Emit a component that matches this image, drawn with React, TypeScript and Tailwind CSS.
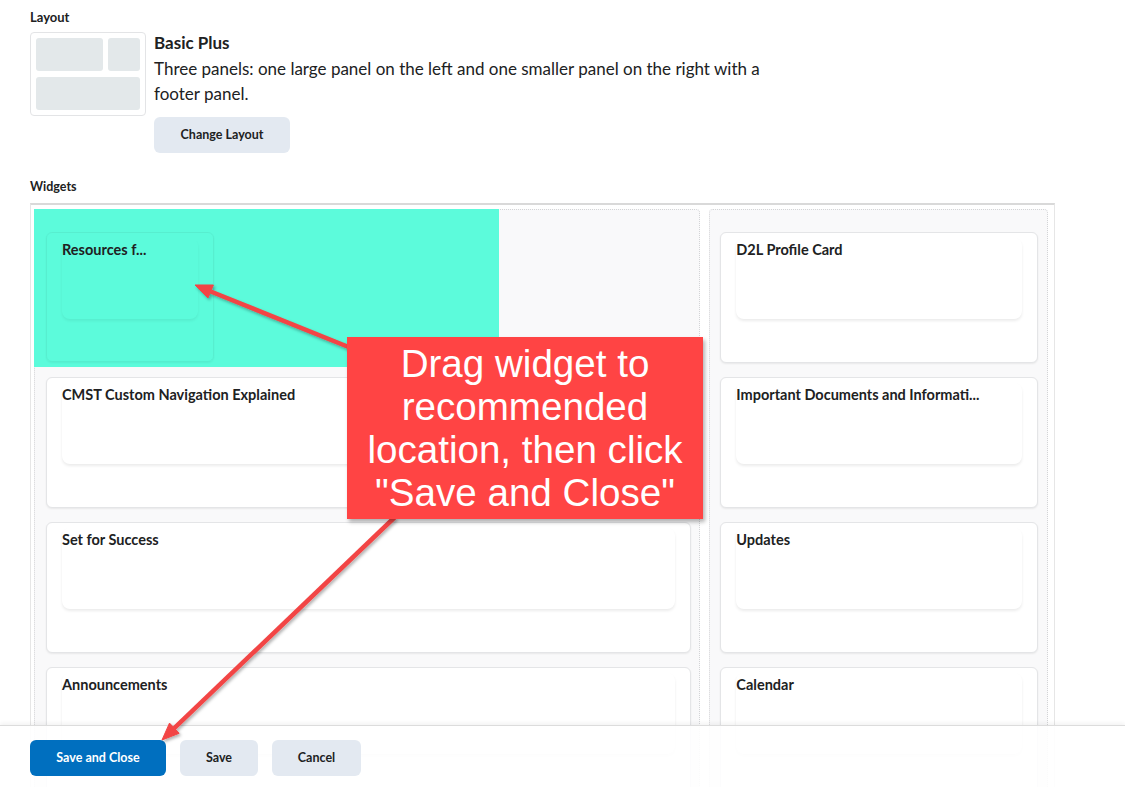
import React from 'react';

type Card = { title: string };

const leftCards: Card[] = [
  { title: 'CMST Custom Navigation Explained' },
  { title: 'Set for Success' },
  { title: 'Announcements' },
];

const rightCards: Card[] = [
  { title: 'D2L Profile Card' },
  { title: 'Important Documents and Informati...' },
  { title: 'Updates' },
  { title: 'Calendar' },
];

function WidgetCard({ title, teal = false }: { title: string; teal?: boolean }) {
  return (
    <div
      className={
        teal
          ? 'h-[130px] w-[168px] rounded-[6px] border border-black/[0.05] px-[15px] pt-[5px] shadow-[0_1px_2px_rgba(0,0,0,0.05)]'
          : 'h-[131px] w-full rounded-[6px] border border-[#e4e5e7] bg-white px-[15px] pt-[5px] shadow-[0_1px_2px_rgba(0,0,0,0.07)]'
      }
    >
      <div
        className={
          teal
            ? 'h-[81px] rounded-[8px] shadow-[0_2px_3px_rgba(0,0,0,0.06)]'
            : 'h-[81px] rounded-[8px] bg-white shadow-[0_2px_3px_rgba(0,0,0,0.08)]'
        }
      >
        <div className="pt-[2px] text-[14.5px] font-bold leading-[20px] text-[#202122]">{title}</div>
      </div>
    </div>
  );
}

export default function App() {
  return (
    <div className="relative h-[787px] w-[1125px] overflow-hidden bg-white font-['Lato','Noto_Sans',sans-serif] text-[#202122]">
      <div className="pl-[30px] pt-[9px]">
        {/* Layout */}
        <div className="text-[13px] font-bold leading-[16px]">Layout</div>
        <div className="mt-[7px] flex gap-[8px]">
          <div className="h-[84px] w-[116px] rounded-[4px] border border-[#e3e4e6] p-[5px]">
            <div className="grid grid-cols-[67px_32px] grid-rows-[33px_33px] gap-x-[5px] gap-y-[6px]">
              <div className="rounded-[3px] bg-[#e3e8ea]" />
              <div className="rounded-[3px] bg-[#e3e8ea]" />
              <div className="col-span-2 rounded-[3px] bg-[#e3e8ea]" />
            </div>
          </div>
          <div>
            <div className="text-[17px] font-bold leading-[22px]">Basic Plus</div>
            <p className="mt-[2px] w-[625px] text-[17px] leading-[25px] text-[#202122]">
              Three panels: one large panel on the left and one smaller panel on the right with a footer panel.
            </p>
            <button className="mt-[11px] h-[36px] w-[136px] rounded-[6px] bg-[#e3e9f1] text-[12.5px] font-bold text-[#202122]">
              Change Layout
            </button>
          </div>
        </div>

        {/* Widgets */}
        <div className="mt-[26px] text-[12.5px] font-bold leading-[16px]">Widgets</div>
        <div className="mt-[8px] w-[1025px] border-x border-t-2 border-x-[#e6e6e6] border-t-[#d9d9d9] pl-[3px] pr-[6px] pt-[4px]">
          <div className="flex gap-[9px]">
            {/* main panel */}
            <div className="w-[667px] rounded-[4px] border border-dotted border-[#d3d4d6] bg-[#f9f9fa] pl-[11px] pr-[8px] pt-[22px]">
              <div className="-ml-[12px] -mt-[23px] h-[158px] w-[465px] bg-[#5cfbdb] pl-[12px] pt-[23px]">
                <WidgetCard title="Resources f..." teal />
              </div>
              <div className="mt-[10px] flex flex-col gap-[14px]">
                {leftCards.map((c) => (
                  <WidgetCard key={c.title} title={c.title} />
                ))}
              </div>
            </div>
            {/* side panel */}
            <div className="w-[339px] rounded-[4px] border border-dotted border-[#d3d4d6] bg-[#f9f9fa] pl-[10px] pr-[9px] pt-[22px]">
              <div className="flex flex-col gap-[14px]">
                {rightCards.map((c) => (
                  <WidgetCard key={c.title} title={c.title} />
                ))}
              </div>
            </div>
          </div>
        </div>
      </div>

      {/* sticky footer */}
      <div className="absolute bottom-0 left-0 right-0 z-10 h-[62px] border-t border-[#dcdcdc] bg-white/90 pl-[30px] pt-[14px] shadow-[0_-2px_4px_rgba(0,0,0,0.05)]">
        <div className="flex gap-[14px]">
          <button className="h-[36px] w-[136px] rounded-[6px] bg-[#006fbf] text-[12.5px] font-bold text-white">
            Save and Close
          </button>
          <button className="h-[36px] w-[78px] rounded-[6px] bg-[#e3e9f1] text-[12.5px] font-bold text-[#202122]">
            Save
          </button>
          <button className="h-[36px] w-[89px] rounded-[6px] bg-[#e3e9f1] text-[12.5px] font-bold text-[#202122]">
            Cancel
          </button>
        </div>
      </div>

      {/* annotation arrows */}
      <svg className="pointer-events-none absolute inset-0 z-20" width="1125" height="787">
        <defs>
          <filter id="sh" x="-20%" y="-20%" width="140%" height="140%">
            <feDropShadow dx="1.5" dy="2" stdDeviation="1.5" floodColor="#000" floodOpacity="0.3" />
          </filter>
        </defs>
        <g filter="url(#sh)" fill="#f24545" stroke="#f24545">
          <line x1="356" y1="350" x2="210.7" y2="291.5" strokeWidth="4.5" />
          <polygon points="195,285 213.4,285 208,298" strokeWidth="1" />
          <line x1="395" y1="517" x2="174.3" y2="728.2" strokeWidth="4.5" />
          <polygon points="162,740 179.1,733.3 169.5,723.1" strokeWidth="1" />
        </g>
      </svg>

      {/* callout */}
      <div className="absolute left-[347px] top-[337px] z-30 flex h-[182px] w-[356px] items-center justify-center bg-[#ff4444] shadow-[2px_3px_4px_rgba(0,0,0,0.3)]">
        <p className="whitespace-nowrap text-center font-['Liberation_Sans',Arial,sans-serif] text-[38.6px] leading-[43px] text-white">
          Drag widget to
          <br />
          recommended
          <br />
          location, then click
          <br />
          "Save and Close"
        </p>
      </div>
    </div>
  );
}
